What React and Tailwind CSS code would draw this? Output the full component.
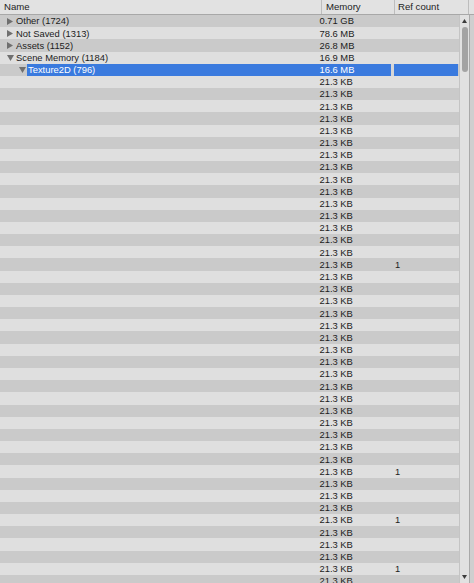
import React from "react";

const FONT = { fontFamily: '"Liberation Sans", Arial, sans-serif' };

function RightTri() {
  return (
    <svg width="6" height="7" viewBox="0 0 6 7" className="shrink-0">
      <polygon points="0,0 6,3.5 0,7" fill="#6f6f6f" />
    </svg>
  );
}

function DownTri() {
  return (
    <svg width="7" height="6" viewBox="0 0 7 6" className="shrink-0">
      <polygon points="0,0 7,0 3.5,6" fill="#6f6f6f" />
    </svg>
  );
}

const top = [
  { label: "Other (1724)", mem: "0.71 GB", open: false },
  { label: "Not Saved (1313)", mem: "78.6 MB", open: false },
  { label: "Assets (1152)", mem: "26.8 MB", open: false },
  { label: "Scene Memory (1184)", mem: "16.9 MB", open: true },
];

const refRows = new Set([20, 37, 41, 45]);

function Row({ i, children }) {
  return (
    <div
      className={
        i % 2 === 0
          ? "flex h-[12.18px] items-center bg-[#cacaca] leading-none text-[#1c1c1c]"
          : "flex h-[12.18px] items-center bg-[#dfdfdf] leading-none text-[#1c1c1c]"
      }
    >
      {children}
    </div>
  );
}

export default function App() {
  const rows = [];
  top.forEach((r, i) => {
    rows.push(
      <Row key={i} i={i}>
        <div className="flex h-full w-[319px] items-center pl-[7px]">
          {r.open ? <DownTri /> : <RightTri />}
          <span className={r.open ? "ml-[2px]" : "ml-[3px]"}>{r.label}</span>
        </div>
        <div className="w-[72px] pl-[0.5px]">{r.mem}</div>
        <div className="w-[68px]"></div>
      </Row>
    );
  });
  // selected Texture2D row
  rows.push(
    <Row key={4} i={4}>
      <div className="flex h-full w-[319px] items-center">
        <div className="flex h-full w-[27px] items-center pl-[19px]">
          <DownTri />
        </div>
        <div className="flex h-full flex-1 items-center bg-[#3a7ade] pl-[1px] text-white">
          Texture2D (796)
        </div>
      </div>
      <div className="flex h-full w-[72px] items-center bg-[#3a7ade] pl-[0.5px] text-white">
        16.6 MB
      </div>
      <div className="h-full w-[3px] bg-[#d6d6d6]"></div>
      <div className="h-full w-[64px] bg-[#3a7ade]"></div>
      <div className="h-full w-[1px]"></div>
    </Row>
  );
  for (let i = 5; i < 47; i++) {
    rows.push(
      <Row key={i} i={i}>
        <div className="w-[319px]"></div>
        <div className="w-[75px] pl-[0.5px]">21.3 KB</div>
        <div className="w-[65px] pl-[1px]">{refRows.has(i) ? "1" : ""}</div>
      </Row>
    );
  }

  return (
    <div
      className="flex h-[583px] w-[474px] flex-col overflow-hidden bg-[#dfdfdf] text-[9.4px]"
      style={FONT}
    >
      {/* header */}
      <div className="flex h-[15px] shrink-0 items-center border-b border-[#a8a8a8] bg-[#e2e2e2] text-[9.6px] leading-none text-[#222]">
        <div className="flex h-full w-[322px] items-center border-r border-[#bdbdbd] pl-[4px]">
          Name
        </div>
        <div className="flex h-full w-[73px] items-center border-r border-[#bdbdbd] pl-[4px]">
          Memory
        </div>
        <div className="flex h-full w-[74px] items-center border-r border-[#bdbdbd] pl-[3px]">
          Ref count
        </div>
        <div className="h-full flex-1"></div>
      </div>
      {/* body */}
      <div className="flex min-h-0 flex-1">
        <div className="w-[459px] shrink-0 overflow-hidden">{rows}</div>
        {/* scrollbar */}
        <div className="relative w-[10px] shrink-0 border-l border-[#c4c4c4] bg-[#e1e1e1]">
          <div className="flex h-[12px] items-center justify-center">
            <svg width="5" height="4" viewBox="0 0 5 4">
              <polygon points="2.5,0 5,4 0,4" fill="#3c3c3c" />
            </svg>
          </div>
          <div className="mx-auto h-[45px] w-[6px] rounded-full bg-[#a3a3a3]"></div>
          <div className="absolute bottom-[4px] left-0 right-0 flex justify-center">
            <svg width="5" height="4" viewBox="0 0 5 4">
              <polygon points="0,0 5,0 2.5,4" fill="#3c3c3c" />
            </svg>
          </div>
        </div>
        <div className="flex-1 border-l border-[#a9a9a9] bg-[#cfcfcf]"></div>
      </div>
    </div>
  );
}
